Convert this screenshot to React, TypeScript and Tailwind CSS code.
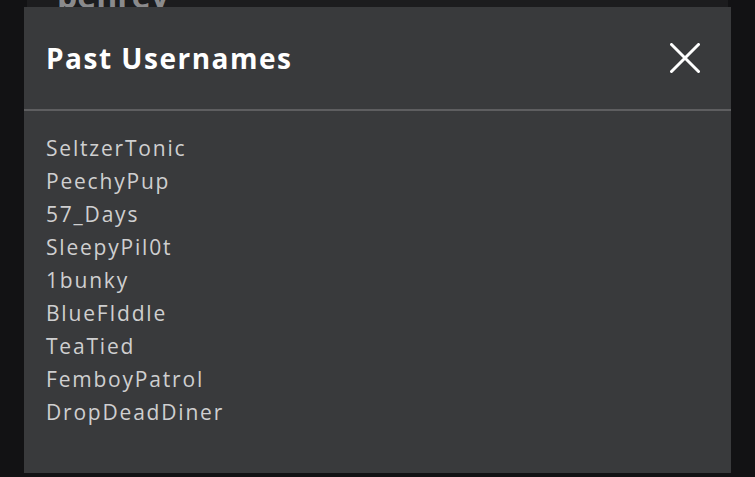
import React from "react";

const names = [
  "SeltzerTonic",
  "PeechyPup",
  "57_Days",
  "SleepyPil0t",
  "1bunky",
  "BlueFIddle",
  "TeaTied",
  "FemboyPatrol",
  "DropDeadDiner",
];

export default function App() {
  return (
    <div className="relative w-[755px] h-[477px] overflow-hidden bg-[#121214] font-['Open_Sans','Lato',sans-serif]">
      <div className="mx-[27px] h-full bg-[#1c1c1e] px-[30px]">
        <div className="-mt-[20px] text-[32px] font-bold text-[#8a8a8c] leading-none">penrey</div>
      </div>
      <div className="absolute left-[24px] top-[7px] w-[707px] h-[466px] bg-[#393a3c] flex flex-col">
        <div className="h-[102px] flex items-center justify-between pl-[22px] pr-[31px]">
          <h1 className="text-[28px] font-bold text-white tracking-[1.5px]">Past Usernames</h1>
          <svg width="30" height="30" viewBox="0 0 30 30" className="text-white">
            <path d="M1.5 1.5 L28.5 28.5 M28.5 1.5 L1.5 28.5" stroke="currentColor" strokeWidth="3" strokeLinecap="round" />
          </svg>
        </div>
        <div className="h-[2px] bg-[#5e5e60]" />
        <ul className="pt-[21px] pl-[22px]">
          {names.map((n) => (
            <li key={n} className="text-[21px] leading-[33px] text-[#cfcfd0] tracking-[1.8px]">
              {n}
            </li>
          ))}
        </ul>
      </div>
    </div>
  );
}
